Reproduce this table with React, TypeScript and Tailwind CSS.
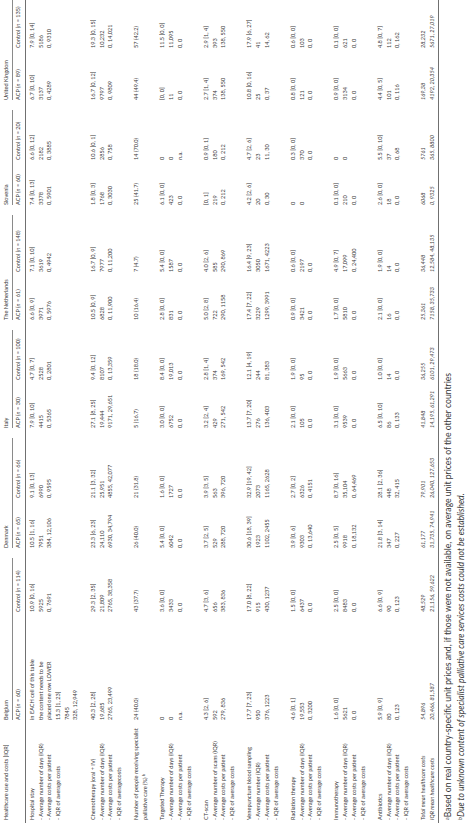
import React from 'react';

type Country = { name: string; acp: number; ctrl: number };
type Group = { label: React.ReactNode[]; vals: string[][]; italic?: boolean; gap?: boolean };

const countries: Country[] = [
  { name: 'Belgium', acp: 60, ctrl: 114 },
  { name: 'Denmark', acp: 65, ctrl: 66 },
  { name: 'Italy', acp: 30, ctrl: 100 },
  { name: 'The Netherlands', acp: 61, ctrl: 148 },
  { name: 'Slovenia', acp: 60, ctrl: 20 },
  { name: 'United Kingdom', acp: 89, ctrl: 135 },
];

const sub = (first: string, last: string): React.ReactNode[] => [
  first,
  '- Average number of days (IQR)',
  '- Average costs per patient',
  last,
];

const groups: Group[] = [
  {
    label: sub('Hospital stay', '- IQR of average costs'),
    vals: [
      ['in EACH cell of this table', 'the content needs to be', 'placed one row LOWER', '15.3 [1, 23]', '7845', '328, 12,949'],
      ['10.9 [0, 16]', '5925', '0, 7691'],
      ['10.5 [1, 16]', '7951', '384, 12,106'],
      ['9.1 [0, 13]', '6990', '0, 9595'],
      ['7.9 [0, 10]', '4415', '0, 5365'],
      ['4.7 [0, 7]', '2528', '0, 2801'],
      ['6.6 [0, 9]', '3971', '0, 5976'],
      ['7.1 [0, 10]', '3619', '0, 4942'],
      ['7.4 [0, 13]', '3378', '0, 5901'],
      ['6.6 [0, 12]', '2182', '0, 3885'],
      ['6.7 [0, 10]', '3137', '0, 4289'],
      ['7.9 [0, 14]', '5186', '0, 9310'],
    ],
    gap: true,
  },
  {
    label: sub('Chemotherapy (oral + IV)', '- IQR of averagecosts'),
    vals: [
      ['40.3 [2, 28]', '19,685', '2765, 23,499'],
      ['29.3 [2, 35]', '21,809', '2765, 38,358'],
      ['23.3 [6, 23]', '24,110', '6930, 34,794'],
      ['21.1 [3, 32]', '25,951', '4855, 42,077'],
      ['27.1 [8, 25]', '19,444', '9171, 29,651'],
      ['9.4 [0, 12]', '8107', '0, 13,359'],
      ['10.5 [0, 9]', '6828', '0, 11,900'],
      ['16.7 [0, 9]', '7977', '0, 11,200'],
      ['1.8 [0, 3]', '1768', '0, 3030'],
      ['10.6 [0, 1]', '2856', '0, 758'],
      ['16.7 [0, 12]', '9797', '0, 9809'],
      ['19.3 [0, 15]', '10,232', '0, 14,021'],
    ],
    gap: true,
  },
  {
    label: [
      'Number of people receiving specialist',
      <>
        palliative care (%) <sup className="text-[4px]">b</sup>
      </>,
    ],
    vals: [
      ['24 (40.0)'], ['43 (37.7)'], ['26 (40.0)'], ['21 (31.8)'], ['5 (16.7)'], ['18 (18.0)'],
      ['10 (16.4)'], ['7 (4.7)'], ['25 (41.7)'], ['14 (70.0)'], ['44 (49.4)'], ['57 (42.2)'],
    ],
    gap: true,
  },
  {
    label: sub('Targeted Therapy', '- IQR of average costs'),
    vals: [
      ['0', '0', 'n.a.'],
      ['3.6 [0, 0]', '3433', '0, 0'],
      ['5.4 [0, 0]', '6042', '0, 0'],
      ['1.6 [0, 0]', '1727', '0, 0'],
      ['3.0 [0, 0]', '6752', '0, 0'],
      ['8.4 [0, 0]', '19,013', '0, 0'],
      ['2.8 [0, 0]', '831', '0, 0'],
      ['5.4 [0, 0]', '1587', '0, 0'],
      ['6.1 [0, 0]', '423', '0, 0'],
      ['0', '0', 'n.a.'],
      ['[0, 0]', '11', '0, 0'],
      ['11.5 [0, 0]', '11,095', '0, 0'],
    ],
    gap: true,
  },
  {
    label: ['CT-scan', '- Average number of scans (IQR)', '- Average costs per patient', '- IQR of average costs'],
    vals: [
      ['4.3 [2, 6]', '592', '279, 836'],
      ['4.7 [3, 6]', '656', '383, 836'],
      ['3.7 [2, 5]', '529', '288, 720'],
      ['3.9 [3, 5]', '563', '396, 720'],
      ['3.2 [2, 4]', '429', '271, 542'],
      ['2.8 [1, 4]', '374', '169, 542'],
      ['5.0 [2, 8]', '722', '290, 1158'],
      ['4.0 [2, 6]', '585', '290, 869'],
      ['[0, 1]', '219', '0, 212'],
      ['0.9 [0, 1]', '180', '0, 212'],
      ['2.7 [1, 4]', '374', '138, 550'],
      ['2.9 [1, 4]', '393', '138, 550'],
    ],
    gap: true,
  },
  {
    label: ['Venepuncture blood sampling', '- Average number (IQR)', '- Average costs per patient', '- IQR of average costs'],
    vals: [
      ['17.7 [7, 23]', '950', '376, 1223'],
      ['17.0 [8, 22]', '915', '430, 1237'],
      ['30.6 [18, 39]', '1923', '1102, 2455'],
      ['32.9 [19, 42]', '2073', '1165, 2628'],
      ['13.7 [7, 20]', '276', '136, 403'],
      ['12.1 [4, 19]', '244', '81, 383'],
      ['17.4 [7, 22]', '3229', '1299, 3991'],
      ['16.4 [9, 23]', '3050', '1671, 4223'],
      ['4.2 [2, 6]', '20', '0, 30'],
      ['4.7 [2, 6]', '23', '11, 30'],
      ['10.8 [0, 16]', '25', '0, 37'],
      ['17.9 [6, 27]', '41', '14, 62'],
    ],
    gap: true,
  },
  {
    label: sub('Radiation therapy', '- IQR of average costs'),
    vals: [
      ['4.6 [0, 1]', '19,553', '0, 3200'],
      ['1.5 [0, 0]', '6437', '0, 0'],
      ['3.9 [0, 6]', '9303', '0, 13,640'],
      ['2.7 [0, 2]', '6326', '0, 4151'],
      ['2.1 [0, 0]', '105', '0, 0'],
      ['1.9 [0, 0]', '95', '0, 0'],
      ['0.9 [0, 0]', '3421', '0, 0'],
      ['0.6 [0, 0]', '2197', '0, 0'],
      ['0', '0'],
      ['0.3 [0, 0]', '370', '0, 0'],
      ['0.8 [0, 0]', '121', '0, 0'],
      ['0.6 [0, 0]', '103', '0, 0'],
    ],
    gap: true,
  },
  {
    label: sub('Immunotherapy', '- IQR of average costs'),
    vals: [
      ['1.6 [0, 0]', '5621', '0, 0'],
      ['2.5 [0, 0]', '8483', '0, 0'],
      ['2.5 [0, 5]', '9918', '0, 18,132'],
      ['8.7 [0, 16]', '35,104', '0, 64,469'],
      ['3.1 [0, 0]', '9539', '0, 0'],
      ['1.9 [0, 0]', '5663', '0, 0'],
      ['1.7 [0, 0]', '5810', '0, 0'],
      ['4.9 [0, 7]', '17,099', '0, 24,400'],
      ['0.1 [0, 0]', '210', '0, 0'],
      ['0', '0'],
      ['0.9 [0, 0]', '3134', '0, 0'],
      ['0.1 [0, 0]', '621', '0, 0'],
    ],
    gap: true,
  },
  {
    label: sub('Antibiotics', '- IQR of average costs'),
    vals: [
      ['5.9 [0, 9]', '80', '0, 123'],
      ['6.6 [0, 9]', '90', '0, 123'],
      ['21.8 [3, 14]', '347', '0, 227'],
      ['28.1 [2, 36]', '448', '32, 415'],
      ['6.5 [0, 10]', '86', '0, 133'],
      ['1.0 [0, 0]', '14', '0, 0'],
      ['2.1 [0, 0]', '16', '0, 0'],
      ['1.9 [0, 0]', '14', '0, 0'],
      ['2.6 [0, 0]', '18', '0, 0'],
      ['5.5 [0, 10]', '37', '0, 68'],
      ['4.4 [0, 5]', '101', '0, 116'],
      ['4.8 [0, 7]', '112', '0, 162'],
    ],
    gap: true,
  },
  {
    label: ['Total mean healthcare costs', 'IQR mean healthcare costs'],
    vals: [
      ['54,896', '20,466, 81,587'],
      ['48,529', '21,156, 59,622'],
      ['61,177', '31,735, 74,941'],
      ['79,901', '26,040, 127,653'],
      ['41,848', '14,195, 61,291'],
      ['36,255', '6101, 29,473'],
      ['25,361', '7158, 35,733'],
      ['36,448', '12,584, 48,135'],
      ['6068', '0, 9325'],
      ['5761', '365, 8800'],
      ['169,38', '4192, 20,354'],
      ['28,232', '5671, 27,019'],
    ],
    italic: true,
  },
];

// column widths of the table before it is turned on its side
const gridCols =
  'grid grid-cols-[100px_108px_64px_50px_70px_48px_60px_48px_67px_45px_60px_52px_68px]';

function Lines({ items }: { items: React.ReactNode[] }) {
  return (
    <div className="pl-[3px] whitespace-nowrap">
      {items.map((t, i) => (
        <div key={i}>{t}</div>
      ))}
    </div>
  );
}

export default function App() {
  return (
    <div className="w-[474px] h-[823px] overflow-hidden bg-white">
      <div className="w-[823px] h-[474px] origin-top-left -rotate-90 translate-y-[823px] text-[#383838] font-[Lato,'Open_Sans',sans-serif]">
        <div className="w-[840px] text-[5.6px] leading-[8.7px]">
          {/* countries */}
          <div className={`${gridCols} pt-[2px]`}>
            <div className="pl-[3px] whitespace-nowrap">Healthcare use and costs [IQR]</div>
            {countries.map((c) => (
              <div key={c.name} className="col-span-2 pl-[3px] pr-[7px]">
                <div className="border-b border-[#8a8a8a] pb-[1px] whitespace-nowrap">{c.name}</div>
              </div>
            ))}
          </div>

          {/* study arms */}
          <div className={`${gridCols} pt-[1px] pb-[3px] border-b border-[#707070]`}>
            <div />
            {countries.map((c) => (
              <React.Fragment key={c.name}>
                <div className="pl-[3px] whitespace-nowrap">
                  ACP (<span className="italic">n</span> = {c.acp})
                </div>
                <div className="pl-[3px] whitespace-nowrap">
                  Control (<span className="italic">n</span> = {c.ctrl})
                </div>
              </React.Fragment>
            ))}
          </div>

          {/* body */}
          <div className="pt-[1.5px] pb-[1px] border-b border-[#707070]">
            {groups.map((g, gi) => (
              <div key={gi} className={`${gridCols} ${g.gap ? 'pb-[8.7px]' : ''} ${g.italic ? 'italic' : ''}`}>
                <Lines items={g.label} />
                {g.vals.map((v, vi) => (
                  <Lines key={vi} items={v} />
                ))}
              </div>
            ))}
          </div>

          {/* footnotes */}
          <div className="pt-[3.5px] pl-[3px] text-[8.6px] leading-[13px] whitespace-nowrap">
            <div>
              <sup className="text-[5.5px]">a</sup>Based on real country-specific unit prices and, if those were not
              available, on average unit prices of the other countries
            </div>
            <div className="italic">
              <sup className="text-[5.5px]">b</sup>Due to unknown content of specialist palliative care services costs
              could not be established.
            </div>
          </div>
        </div>
      </div>
    </div>
  );
}
